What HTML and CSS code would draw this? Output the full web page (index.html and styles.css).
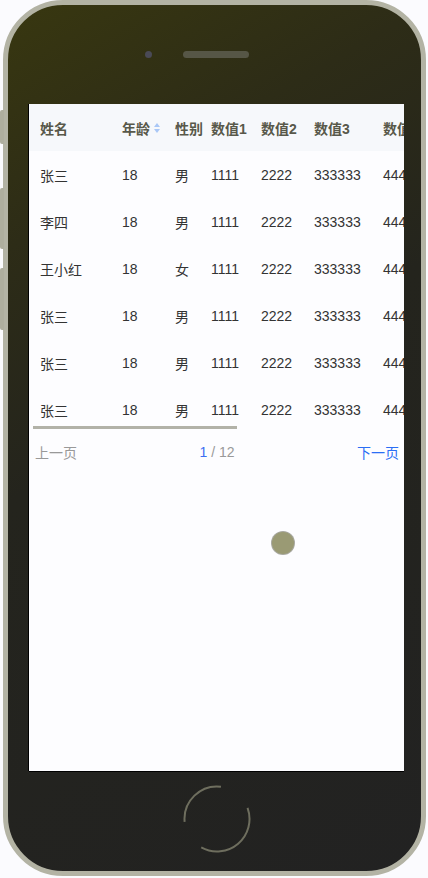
FILE: index.html
```html
<!DOCTYPE html>
<html lang="zh">
<head>
<meta charset="utf-8">
<title>Table</title>
<link rel="stylesheet" href="styles.css">
</head>
<body>
<div class="phone">
  <span class="side-btn btn1"></span>
  <span class="side-btn btn2"></span>
  <span class="side-btn btn3"></span>
  <div class="top">
    <span class="camera"></span>
    <span class="speaker"></span>
  </div>
  <div class="screen">
    <div class="table-wrap">
      <div class="row head">
        <div class="cell">姓名</div>
        <div class="cell sort">年龄<svg class="sort-icon" width="6" height="12" viewBox="0 0 6 12"><path d="M3 1 L6 5 L0 5 Z" fill="#a9c7f6"/><path d="M3 11 L6 7 L0 7 Z" fill="#a9c7f6"/></svg></div>
        <div class="cell">性别</div>
        <div class="cell">数值1</div>
        <div class="cell">数值2</div>
        <div class="cell">数值3</div>
        <div class="cell">数值4</div>
      </div>
      <div class="row"><div class="cell">张三</div><div class="cell">18</div><div class="cell">男</div><div class="cell">1111</div><div class="cell">2222</div><div class="cell">333333</div><div class="cell">44444</div></div>
      <div class="row"><div class="cell">李四</div><div class="cell">18</div><div class="cell">男</div><div class="cell">1111</div><div class="cell">2222</div><div class="cell">333333</div><div class="cell">44444</div></div>
      <div class="row"><div class="cell">王小红</div><div class="cell">18</div><div class="cell">女</div><div class="cell">1111</div><div class="cell">2222</div><div class="cell">333333</div><div class="cell">44444</div></div>
      <div class="row"><div class="cell">张三</div><div class="cell">18</div><div class="cell">男</div><div class="cell">1111</div><div class="cell">2222</div><div class="cell">333333</div><div class="cell">44444</div></div>
      <div class="row"><div class="cell">张三</div><div class="cell">18</div><div class="cell">男</div><div class="cell">1111</div><div class="cell">2222</div><div class="cell">333333</div><div class="cell">44444</div></div>
      <div class="row"><div class="cell">张三</div><div class="cell">18</div><div class="cell">男</div><div class="cell">1111</div><div class="cell">2222</div><div class="cell">333333</div><div class="cell">44444</div></div>
    </div>
    <div class="scroll-track"><span class="scroll-thumb"></span></div>
    <div class="pager">
      <span class="prev">上一页</span>
      <span class="pages"><span class="cur">1</span> / 12</span>
      <span class="next">下一页</span>
    </div>
    <span class="touch-dot"></span>
  </div>
  <div class="bottom">
    <svg class="home" width="70" height="70" viewBox="0 0 70 70">
      <path d="M2.63 37.83 A32.5 32.5 0 0 1 38.96 2.73" fill="none" stroke="#6e6e5e" stroke-width="2"/>
      <path d="M65.54 23.88 A32.5 32.5 0 0 1 19.24 63.43" fill="none" stroke="#6e6e5e" stroke-width="2"/>
    </svg>
  </div>
</div>
</body>
</html>
```
FILE: styles.css
```css
html, body {
  margin: 0;
  padding: 0;
}
body {
  background: #fbfbfe;
  width: 428px;
  height: 878px;
  overflow: hidden;
  font-family: "Liberation Sans", "Noto Sans CJK SC", sans-serif;
}
.phone {
  position: relative;
  box-sizing: border-box;
  margin-left: 3px;
  width: 423px;
  height: 876px;
  border: 5px solid #b3b3a4;
  border-radius: 60px;
  background: linear-gradient(150deg, #383710 0, #2d2c17 22%, #24241d 45%, #222222 100%);
  padding-left: 21px;
  display: flex;
  flex-direction: column;
}
.side-btn {
  position: absolute;
  left: -8px;
  width: 4px;
  background: #aeae9e;
  border-radius: 2px 0 0 2px;
}
.btn1 { top: 105px; height: 34px; }
.btn2 { top: 183px; height: 61px; }
.btn3 { top: 263px; height: 62px; }
.top {
  height: 99px;
  display: flex;
  align-items: flex-start;
}
.camera {
  margin-top: 46px;
  margin-left: 116px;
  width: 7px;
  height: 7px;
  border-radius: 50%;
  background: #4a4a56;
}
.speaker {
  margin-top: 46px;
  margin-left: 31px;
  width: 66px;
  height: 7px;
  border-radius: 4px;
  background: #565646;
}
.screen {
  position: relative;
  width: 375px;
  height: 667px;
  background: #fdfdff;
  box-shadow: -1px 0 0 #000, 0 1px 0 #000;
  overflow: hidden;
}
.table-wrap {
  height: 322px;
  overflow: hidden;
}
.row {
  display: grid;
  grid-template-columns: 82px 53px 36px 50px 53px 69px 60px;
  padding-left: 11px;
  height: 47px;
  align-items: center;
  font-size: 14px;
  color: #333;
  white-space: nowrap;
}
.row.head {
  height: 47px;
  background: #f6f8fb;
  font-weight: bold;
  color: #58584a;
}
.cell.sort {
  display: flex;
  align-items: center;
}
.sort-icon {
  margin-left: 4px;
}
.scroll-track {
  height: 3px;
  padding-left: 4px;
}
.scroll-thumb {
  display: block;
  width: 204px;
  height: 3px;
  background: #b2b2a8;
}
.pager {
  height: 46px;
  display: flex;
  align-items: center;
  justify-content: space-between;
  padding: 0 5px 0 6px;
  font-size: 14px;
  color: #999;
}
.cur {
  color: #3d6ef2;
}
.next {
  color: #2b6ef5;
}
.touch-dot {
  position: absolute;
  left: 243px;
  top: 428px;
  width: 22px;
  height: 22px;
  border-radius: 50%;
  background: #9a9a74;
  box-shadow: 0 0 0 1px #a8a8a0;
}
.bottom {
  flex: 1;
  display: flex;
}
.home {
  margin-top: 13px;
  margin-left: 153px;
}
```
